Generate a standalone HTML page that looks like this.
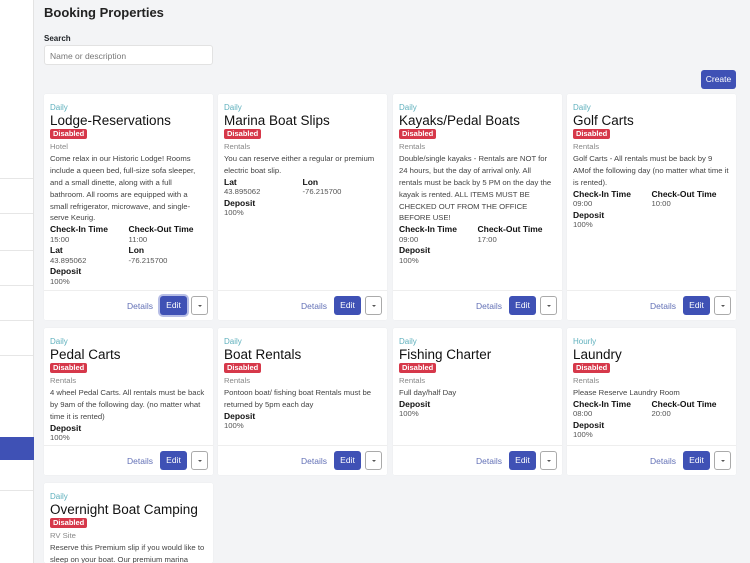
<!DOCTYPE html>
<html style="overflow:hidden;height:563px"><head><meta charset="utf-8"><style>
*{box-sizing:border-box;margin:0;padding:0}
body{width:750px;height:563px;overflow:hidden;background:#f3f4f6;font-family:"Liberation Sans",sans-serif;color:#212529;position:relative}
.side{position:absolute;left:0;top:0;width:34px;height:563px;background:#fff;border-right:1px solid #e3e3e3}
.side i{position:absolute;left:0;width:33px;height:1px;background:#e6e6e6}
.side b{position:absolute;left:0;top:437px;width:34px;height:23px;background:#3f51b5}
h1{position:absolute;left:44px;top:5px;font-size:13px;font-weight:bold;color:#222}
.lbl{position:absolute;left:44px;top:34px;font-size:8px;font-weight:bold}
.inp{position:absolute;left:44px;top:45px;width:169px;height:20px;background:#fff;border:1px solid #e2e2e2;border-radius:3px;font-size:8.5px;color:#777;padding:5px 5px}
.create{position:absolute;left:701px;top:70px;width:35px;height:19px;background:#3f51b5;color:#fff;font-size:8.5px;border-radius:3px;text-align:center;line-height:19px}
.c{position:absolute;background:#fff;width:169px;border-radius:2px;box-shadow:0 0 1px rgba(0,0,0,.08);overflow:hidden}
.bd{padding:8px 6px 0 6px;font-size:7.7px;line-height:11.9px;color:#444}
.d{color:#5fb0bd;font-size:8px;line-height:11px}
.t{font-size:13.5px;line-height:15px;color:#111}
.bg{display:inline-block;background:#d6384a;color:#fff;font-weight:bold;font-size:7.5px;line-height:10px;padding:0 3px;border-radius:2px;margin:1px 0 2px}
.cat{color:#888}
.g{display:flex;flex-wrap:wrap}
.g>div{width:50%}
.k{font-weight:bold;font-size:8.5px;line-height:10.5px;color:#111;white-space:nowrap}
.v{line-height:10.5px;color:#555}
.f{position:absolute;left:0;right:0;bottom:0;height:30px;border-top:1px solid #eee;display:flex;justify-content:flex-end;align-items:center;padding-right:5px;font-size:8.5px;background:#fff}
.f .de{color:#6270b6;margin-right:7px}
.f .ed{background:#3f51b5;color:#fff;width:27px;height:19px;line-height:19px;text-align:center;border-radius:3px;margin-right:4px}
.f .dd{width:17px;height:19px;border:1px solid #aaa;border-radius:3px;position:relative}
.f .dd:after{content:"";position:absolute;left:6px;top:8px;border-left:2px solid transparent;border-right:2px solid transparent;border-top:2px solid #555}
</style></head><body>
<div class="side"><i style="top:178px"></i><i style="top:213px"></i><i style="top:250px"></i><i style="top:285px"></i><i style="top:320px"></i><i style="top:355px"></i><b></b><i style="top:490px"></i></div>
<h1>Booking Properties</h1>
<div class="lbl">Search</div>
<div class="inp">Name or description</div>
<div class="create">Create</div>

<div class="c" style="left:44px;top:94px;height:226px"><div class="bd"><div class="d">Daily</div><div class="t">Lodge-Reservations</div><span class="bg">Disabled</span><div class="cat">Hotel</div><div>Come relax in our Historic Lodge! Rooms include a queen bed, full-size sofa sleeper, and a small dinette, along with a full bathroom. All rooms are equipped with a small refrigerator, microwave, and single-serve Keurig.</div><div class="g"><div><div class="k">Check-In Time</div><div class="v">15:00</div></div><div><div class="k">Check-Out Time</div><div class="v">11:00</div></div><div><div class="k">Lat</div><div class="v">43.895062</div></div><div><div class="k">Lon</div><div class="v">-76.215700</div></div><div><div class="k">Deposit</div><div class="v">100%</div></div></div></div><div class="f"><span class="de">Details</span><span class="ed" style="box-shadow:0 0 0 2px #b7bee6">Edit</span><span class="dd"></span></div></div>

<div class="c" style="left:218px;top:94px;height:226px"><div class="bd"><div class="d">Daily</div><div class="t">Marina Boat Slips</div><span class="bg">Disabled</span><div class="cat">Rentals</div><div>You can reserve either a regular or premium electric boat slip.</div><div class="g"><div><div class="k">Lat</div><div class="v">43.895062</div></div><div><div class="k">Lon</div><div class="v">-76.215700</div></div><div><div class="k">Deposit</div><div class="v">100%</div></div></div></div><div class="f"><span class="de">Details</span><span class="ed">Edit</span><span class="dd"></span></div></div>

<div class="c" style="left:393px;top:94px;height:226px"><div class="bd"><div class="d">Daily</div><div class="t">Kayaks/Pedal Boats</div><span class="bg">Disabled</span><div class="cat">Rentals</div><div>Double/single kayaks - Rentals are NOT for 24 hours, but the day of arrival only. All rentals must be back by 5 PM on the day the kayak is rented. ALL ITEMS MUST BE CHECKED OUT FROM THE OFFICE BEFORE USE!</div><div class="g"><div><div class="k">Check-In Time</div><div class="v">09:00</div></div><div><div class="k">Check-Out Time</div><div class="v">17:00</div></div><div><div class="k">Deposit</div><div class="v">100%</div></div></div></div><div class="f"><span class="de">Details</span><span class="ed">Edit</span><span class="dd"></span></div></div>

<div class="c" style="left:567px;top:94px;height:226px"><div class="bd"><div class="d">Daily</div><div class="t">Golf Carts</div><span class="bg">Disabled</span><div class="cat">Rentals</div><div>Golf Carts - All rentals must be back by 9 AMof the following day (no matter what time it is rented).</div><div class="g"><div><div class="k">Check-In Time</div><div class="v">09:00</div></div><div><div class="k">Check-Out Time</div><div class="v">10:00</div></div><div><div class="k">Deposit</div><div class="v">100%</div></div></div></div><div class="f"><span class="de">Details</span><span class="ed">Edit</span><span class="dd"></span></div></div>

<div class="c" style="left:44px;top:328px;height:147px"><div class="bd"><div class="d">Daily</div><div class="t">Pedal Carts</div><span class="bg">Disabled</span><div class="cat">Rentals</div><div>4 wheel Pedal Carts. All rentals must be back by 9am of the following day. (no matter what time it is rented)</div><div class="k">Deposit</div><div class="v">100%</div></div><div class="f"><span class="de">Details</span><span class="ed">Edit</span><span class="dd"></span></div></div>

<div class="c" style="left:218px;top:328px;height:147px"><div class="bd"><div class="d">Daily</div><div class="t">Boat Rentals</div><span class="bg">Disabled</span><div class="cat">Rentals</div><div>Pontoon boat/ fishing boat Rentals must be returned by 5pm each day</div><div class="k">Deposit</div><div class="v">100%</div></div><div class="f"><span class="de">Details</span><span class="ed">Edit</span><span class="dd"></span></div></div>

<div class="c" style="left:393px;top:328px;height:147px"><div class="bd"><div class="d">Daily</div><div class="t">Fishing Charter</div><span class="bg">Disabled</span><div class="cat">Rentals</div><div>Full day/half Day</div><div class="k">Deposit</div><div class="v">100%</div></div><div class="f"><span class="de">Details</span><span class="ed">Edit</span><span class="dd"></span></div></div>

<div class="c" style="left:567px;top:328px;height:147px"><div class="bd"><div class="d">Hourly</div><div class="t">Laundry</div><span class="bg">Disabled</span><div class="cat">Rentals</div><div>Please Reserve Laundry Room</div><div class="g"><div><div class="k">Check-In Time</div><div class="v">08:00</div></div><div><div class="k">Check-Out Time</div><div class="v">20:00</div></div><div><div class="k">Deposit</div><div class="v">100%</div></div></div></div><div class="f"><span class="de">Details</span><span class="ed">Edit</span><span class="dd"></span></div></div>

<div class="c" style="left:44px;top:483px;height:80px"><div class="bd"><div class="d">Daily</div><div class="t">Overnight Boat Camping</div><span class="bg">Disabled</span><div class="cat">RV Site</div><div>Reserve this Premium slip if you would like to sleep on your boat. Our premium marina</div></div></div>
</body></html>
